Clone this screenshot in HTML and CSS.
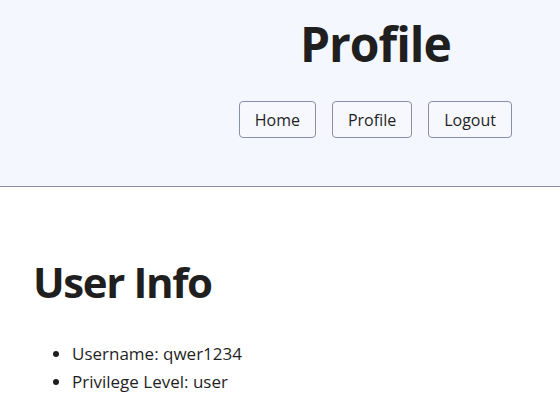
FILE: index.html
```html
<!DOCTYPE html>
<html lang="en">
<head>
<meta charset="utf-8">
<title>Profile</title>
<link rel="stylesheet" href="styles.css">
</head>
<body>
<header class="site-header">
  <div class="header-inner">
    <h1 class="page-title">Profile</h1>
    <nav class="nav">
      <button class="nav-btn">Home</button>
      <button class="nav-btn">Profile</button>
      <button class="nav-btn">Logout</button>
    </nav>
  </div>
</header>
<main class="content">
  <h2 class="section-title">User Info</h2>
  <ul class="info-list">
    <li>Username: qwer1234</li>
    <li>Privilege Level: user</li>
  </ul>
</main>
</body>
</html>
```

FILE: styles.css
```css
html, body {
  margin: 0;
  padding: 0;
  background: #ffffff;
}
body {
  font-family: "Open Sans", "Noto Sans", sans-serif;
  color: #1f1f1f;
}
.site-header {
  background: #f4f7fe;
  border-bottom: 1px solid #8a8fa8;
  height: 186px;
  display: flex;
  justify-content: flex-end;
  padding: 0 48px;
  box-sizing: content-box;
}
.header-inner {
  display: flex;
  flex-direction: column;
  align-items: center;
  padding-top: 12px;
}
.page-title {
  margin: 0;
  font-size: 48px;
  line-height: 64px;
  font-weight: 700;
  letter-spacing: -1px;
}
.nav {
  display: flex;
  gap: 16px;
  margin-top: 25px;
}
.nav-btn {
  height: 37px;
  padding: 0 15px;
  border: 1px solid #8a8fa8;
  border-radius: 4px;
  background: #f6f8fd;
  font-family: inherit;
  font-size: 16px;
  color: #1f1f1f;
}
.content {
  padding: 0 33px;
}
.section-title {
  margin: 67px 0 0;
  font-size: 42px;
  line-height: 56px;
  font-weight: 700;
  letter-spacing: -1.4px;
}
.info-list {
  margin: 30px 0 0;
  padding-left: 39px;
  font-size: 17px;
  line-height: 28px;
}
```
